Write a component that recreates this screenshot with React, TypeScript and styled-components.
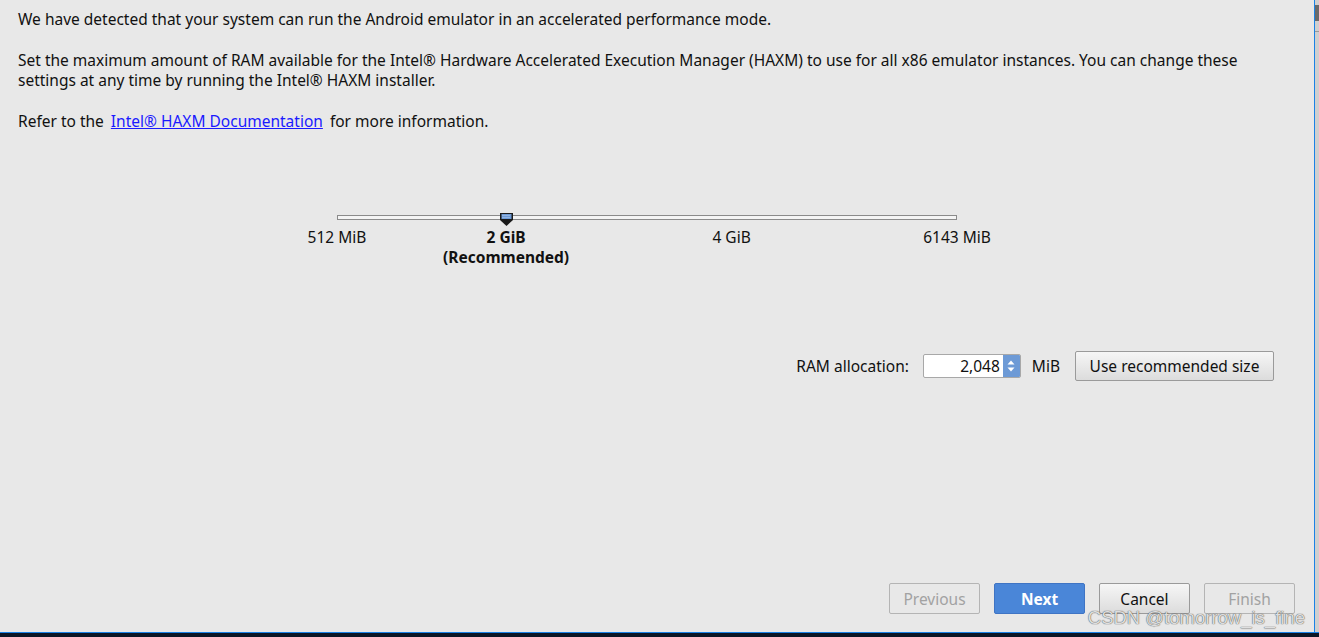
import React from "react";
import styled, { createGlobalStyle } from "styled-components";

const Global = createGlobalStyle`
  html, body { margin: 0; padding: 0; }
  body {
    width: 1319px;
    height: 637px;
    overflow: hidden;
    background: #0b1626;
    font-family: "Noto Sans", "Open Sans", sans-serif;
  }
`;

const Screen = styled.div`
  display: grid;
  grid-template-columns: 1314px 1px 4px;
  grid-template-rows: 632px 1px 4px;
  width: 1319px;
  height: 637px;
`;

const Panel = styled.div`
  position: relative;
  background: #e8e8e8;
  display: flex;
  flex-direction: column;
  padding: 9px 0 0 18px;
  box-sizing: border-box;
  color: #111;
  font-size: 15.5px;
`;

const BlueV = styled.div`
  background: #1a82e6;
`;

const SideStrip = styled.div`
  background: #cfcfcf;
  display: flex;
  flex-direction: column;
  padding-top: 5px;
  gap: 10px;
`;

const SideMark = styled.div<{ $h: number; $c: string }>`
  height: ${(p) => p.$h}px;
  background: ${(p) => p.$c};
`;

const BlueH = styled.div`
  grid-column: 1 / 4;
  background: #1a82e6;
`;

const Bottom = styled.div`
  grid-column: 1 / 4;
  background: #0b1626;
`;

const Para = styled.p`
  margin: 0 0 21px 0;
  line-height: 20px;
`;

const Link = styled.a`
  color: #1a1aff;
  text-decoration: underline;
  margin: 0 3px;
`;

const SliderArea = styled.div`
  position: relative;
  margin: 60px 0 0 319px;
  width: 620px;
  height: 70px;
`;

const Track = styled.div`
  position: absolute;
  left: 0;
  top: 3px;
  width: 620px;
  height: 5px;
  box-sizing: border-box;
  border: 1px solid #8a8a8a;
  background: #f4f4f4;
`;

const Thumb = styled.svg`
  position: absolute;
  top: 0;
  transform: translateX(-7px);
`;

const Tick = styled.div<{ $bold?: boolean }>`
  position: absolute;
  top: 15px;
  transform: translateX(-50%);
  text-align: center;
  white-space: nowrap;
  line-height: 20px;
  font-weight: ${(p) => (p.$bold ? 700 : 400)};
`;

const AllocRow = styled.div`
  display: flex;
  align-items: center;
  justify-content: flex-end;
  margin: 69px 40px 0 0;
`;

const AllocLabel = styled.span`
  margin-right: 14px;
`;

const Spinner = styled.div`
  display: flex;
  height: 24px;
  width: 98px;
  box-sizing: border-box;
  border: 1px solid #a8a8a8;
  border-radius: 2px;
  background: #fff;
  overflow: hidden;
`;

const SpinValue = styled.div`
  flex: 1;
  text-align: right;
  padding-right: 3px;
  line-height: 22px;
`;

const SpinButtons = styled.div`
  width: 17px;
  background: #6d9ad6;
  display: flex;
  align-items: center;
  justify-content: center;
`;

const Unit = styled.span`
  margin: 0 15px 0 11px;
`;

const Button = styled.button<{ $variant?: "default" | "primary" | "disabled" }>`
  font-family: inherit;
  font-size: 15.5px;
  height: 31px;
  box-sizing: border-box;
  border-radius: 2px;
  padding: 0 10px;
  cursor: default;
  border: 1px solid
    ${(p) =>
      p.$variant === "primary" ? "#3f74c4" : p.$variant === "disabled" ? "#b4b4b4" : "#9a9a9a"};
  background: ${(p) =>
    p.$variant === "primary"
      ? "#4a86d8"
      : p.$variant === "disabled"
      ? "#e8e8e8"
      : "linear-gradient(#f6f6f6, #dcdcdc)"};
  color: ${(p) =>
    p.$variant === "primary" ? "#fff" : p.$variant === "disabled" ? "#a2a2a2" : "#111"};
  font-weight: ${(p) => (p.$variant === "primary" ? 700 : 400)};
`;

const WideButton = styled(Button)`
  width: 199px;
  height: 30px;
`;

const Footer = styled.div`
  margin-top: auto;
  margin-bottom: 18px;
  display: flex;
  justify-content: flex-end;
  gap: 14px;
  padding-right: 19px;
`;

const NavButton = styled(Button)`
  width: 91px;
`;

const Watermark = styled.div`
  position: absolute;
  right: 9px;
  bottom: 3px;
  font-size: 18.5px;
  font-family: "Liberation Sans", Arial, sans-serif;
  color: rgba(232, 232, 232, 0.95);
  text-shadow: 0 0 1px rgba(50, 50, 50, 0.9), 0 0 1px rgba(80, 80, 80, 0.6);
  pointer-events: none;
`;

const MIN = 512;
const MAX = 6143;
const WIDTH = 620;
const pos = (v: number) => ((v - MIN) / (MAX - MIN)) * WIDTH;

export default function App() {
  return (
    <>
      <Global />
      <Screen>
        <Panel>
          <Para>
            We have detected that your system can run the Android emulator in an accelerated performance mode.
          </Para>
          <Para>
            Set the maximum amount of RAM available for the Intel® Hardware Accelerated Execution Manager (HAXM) to use for all x86 emulator instances. You can change these
            <br />
            settings at any time by running the Intel® HAXM installer.
          </Para>
          <Para>
            Refer to the <Link href="#">Intel® HAXM Documentation</Link> for more information.
          </Para>

          <SliderArea>
            <Track />
            <Thumb style={{ left: pos(2048) }} width="15" height="15" viewBox="0 0 15 15">
              <path d="M1 1 H14 V8 L7.5 14 L1 8 Z" fill="#1a1a1a" />
              <rect x="2.5" y="2" width="10" height="5" fill="#6d9ad6" />
              <path d="M3.5 3.5 H11.5 M3.5 5.5 H11.5" stroke="#c9dcf5" strokeWidth="0.8" strokeDasharray="1 1" />
            </Thumb>
            <Tick style={{ left: pos(512) }}>512 MiB</Tick>
            <Tick style={{ left: pos(2048) }} $bold>
              2 GiB
              <br />
              (Recommended)
            </Tick>
            <Tick style={{ left: pos(4096) }}>4 GiB</Tick>
            <Tick style={{ left: pos(6143) }}>6143 MiB</Tick>
          </SliderArea>

          <AllocRow>
            <AllocLabel>RAM allocation:</AllocLabel>
            <Spinner>
              <SpinValue>2,048</SpinValue>
              <SpinButtons>
                <svg width="8" height="14" viewBox="0 0 8 14">
                  <path d="M0.5 5.5 L4 1.5 L7.5 5.5 Z" fill="#fff" />
                  <path d="M0.5 8.5 L4 12.5 L7.5 8.5 Z" fill="#fff" />
                </svg>
              </SpinButtons>
            </Spinner>
            <Unit>MiB</Unit>
            <WideButton>Use recommended size</WideButton>
          </AllocRow>

          <Footer>
            <NavButton $variant="disabled">Previous</NavButton>
            <NavButton $variant="primary">Next</NavButton>
            <NavButton>Cancel</NavButton>
            <NavButton $variant="disabled">Finish</NavButton>
          </Footer>
          <Watermark>CSDN @tomorrow_is_fine</Watermark>
        </Panel>
        <BlueV />
        <SideStrip>
          <SideMark $h={16} $c="#6a6a6a" />
          <SideMark $h={1} $c="#9a9a9a" />
        </SideStrip>
        <BlueH />
        <Bottom />
      </Screen>
    </>
  );
}
